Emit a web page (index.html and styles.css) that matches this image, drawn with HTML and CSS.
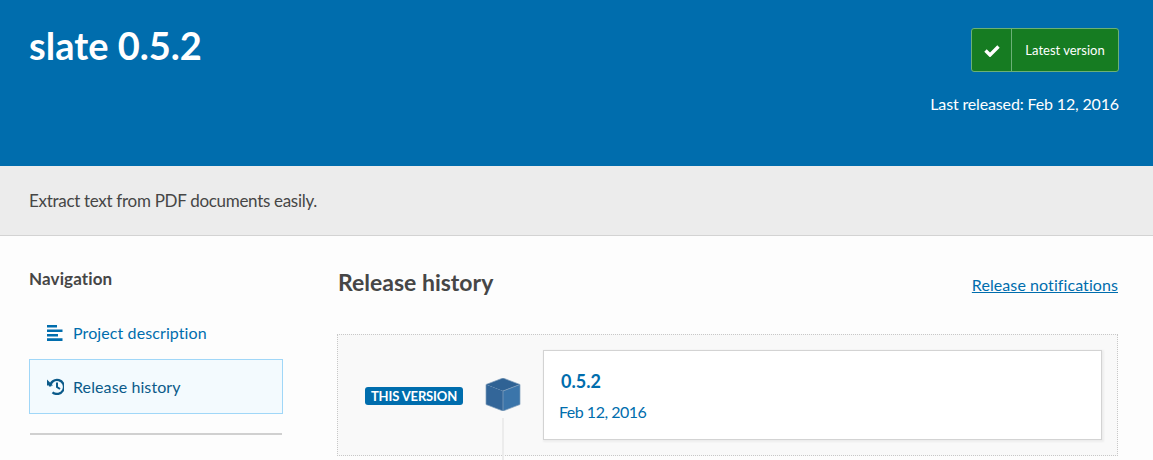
FILE: index.html
```html
<!DOCTYPE html>
<html lang="en">
<head>
<meta charset="utf-8">
<title>slate 0.5.2</title>
<link rel="stylesheet" href="styles.css">
</head>
<body>
<header class="banner">
  <h1 class="title">slate 0.5.2</h1>
  <div class="status">
    <div class="badge">
      <span class="badge-icon">
        <svg width="16" height="13" viewBox="0 0 16 13"><path d="M1.500 6.500 6 11 14.500 2.500" fill="none" stroke="#fff" stroke-width="3.400"/></svg>
      </span>
      <span class="badge-text">Latest version</span>
    </div>
    <p class="released">Last released: Feb 12, 2016</p>
  </div>
</header>
<section class="summary">Extract text from PDF documents easily.</section>
<main class="content">
  <nav class="sidebar">
    <h3 class="nav-title">Navigation</h3>
    <a class="nav-item" href="#">
      <svg class="nav-icon" width="16" height="16" viewBox="0 0 16 16"><path d="M0 0h10v2.600H0zM0 4.400h15.500v2.600H0zM0 8.900h11v2.600H0zM0 13.300h15.500v2.600H0z" fill="#006dad"/></svg>
      Project description
    </a>
    <a class="nav-item nav-active" href="#">
      <svg class="nav-icon" width="17" height="17" viewBox="0 0 17 17"><path d="M3 8.500A7 7 0 1 1 5.500 14.300" fill="none" stroke="#0b5a8a" stroke-width="2.300"/><path d="M0 1.500V7.500H6z" fill="#0b5a8a"/><path d="M10 4.500V9l3 2" fill="none" stroke="#0b5a8a" stroke-width="2"/></svg>
      Release history
    </a>
    <hr class="nav-rule">
  </nav>
  <div class="history">
    <div class="history-head">
      <h2 class="history-title">Release history</h2>
      <a class="notify" href="#">Release notifications</a>
    </div>
    <div class="release-wrap">
      <span class="this-version">THIS VERSION</span>
      <div class="node">
        <svg width="36" height="33" viewBox="0 0 36 33"><path d="M18 0 35 6.500 18 13 1 6.500z" fill="#2f6294"/><path d="M1 6.500 18 13V33L1 26.500z" fill="#336699"/><path d="M18 13 35 6.500V26.500L18 33z" fill="#3b75aa"/><path d="M18 0 35 6.500V26.500L18 33 1 26.500V6.500z" fill="none" stroke="#7f9dba" stroke-width=".7"/><path d="M18 13V33M18 13 35 6.500" fill="none" stroke="#7f9dba" stroke-width=".8"/></svg>
        <span class="node-line"></span>
      </div>
      <a class="release-card" href="#">
        <strong class="release-version">0.5.2</strong>
        <span class="release-date">Feb 12, 2016</span>
      </a>
    </div>
  </div>
</main>
</body>
</html>
```

FILE: styles.css
```css
* { box-sizing: border-box; }
html, body { margin: 0; height: 460px; overflow: hidden; }
body { font-family: "Lato", "Noto Sans", sans-serif; background: #fdfdfd; color: #464646; }
a { text-decoration: none; color: #006dad; }

.banner {
  height: 166px;
  background: #006dad;
  color: #fff;
  display: flex;
  justify-content: space-between;
  padding: 23px 34px 0 29px;
}
.title { margin: 0; font-size: 38px; line-height: 44px; font-weight: 700; }
.status { display: flex; flex-direction: column; align-items: flex-end; padding-top: 5px; }
.badge {
  display: flex;
  width: 148px;
  height: 44px;
  background: #167c22;
  border: 1px solid #6bb077;
  border-radius: 3px;
  align-items: stretch;
}
.badge-icon {
  width: 40px;
  border-right: 1px solid #6bb077;
  display: flex;
  align-items: center;
  justify-content: center;
}
.badge-text { flex: 1; display: flex; align-items: center; justify-content: center; font-size: 13px; }
.released { margin: 21px 0 0; font-size: 16px; line-height: 22px; letter-spacing: -.15px; }

.summary {
  height: 70px;
  background: #ececec;
  border-bottom: 1px solid #d3d3d3;
  padding: 0 29px;
  display: flex;
  align-items: center;
  font-size: 17px;
  letter-spacing: -.3px;
}

.content { display: flex; padding: 30px 35px 0 29px; }
.sidebar { width: 254px; flex: none; }
.nav-title { margin: 0 0 14px; font-size: 17px; line-height: 26px; font-weight: 700; letter-spacing: .12px; }
.nav-item {
  display: flex;
  align-items: center;
  gap: 10px;
  height: 53px;
  padding-left: 17px;
  font-size: 16px;
  letter-spacing: .1px;
  border: 1px solid transparent;
}
.nav-active { height: 55px; background: #f3fafe; border-color: #a0d7f8; color: #0b5a8a; }
.nav-active .nav-icon { margin-right: -1px; }
.nav-rule { margin: 19px 1px 0; border: 0; height: 2px; background: #d0d0d0; }
.nav-icon { flex: none; }

.history { flex: 1; margin-left: 54px; }
.history-head { display: flex; justify-content: space-between; align-items: center; height: 36px; margin: -2px 0 34px; }
.history-title { margin: 0 0 0 1px; font-size: 23px; font-weight: 700; line-height: 36px; }
.notify { font-size: 16px; letter-spacing: .08px; text-decoration: underline; margin-top: 4px; }

.release-wrap {
  height: 122px;
  background: #f9f9f9;
  border: 1px dotted #c8c8c8;
  display: flex;
  align-items: flex-start;
  padding: 15px 15px 0 27px;
}
.this-version {
  margin-top: 37px;
  width: 98px;
  height: 18px;
  background: #006dad;
  color: #fff;
  border-radius: 3px;
  font-size: 13px;
  letter-spacing: -.15px;
  font-weight: 700;
  line-height: 18px;
  text-align: center;
  white-space: nowrap;
}
.node { position: relative; width: 80px; flex: none; height: 105px; display: flex; justify-content: center; padding-top: 28px; }
.node-line { position: absolute; left: 39px; top: 68px; bottom: -6px; width: 2px; background: #ececec; }
.release-card {
  flex: 1;
  height: 90px;
  background: #fff;
  border: 1px solid #d3d3d3;
  box-shadow: 1px 1px 2px 1px rgba(0, 0, 0, .05);
  padding: 18px 16px 0;
  display: flex;
  flex-direction: column;
}
.release-version { margin-left: 1px; font-size: 18px; line-height: 24px; font-weight: 700; }
.release-date { margin-left: -1px; font-size: 16px; line-height: 22px; margin-top: 8px; letter-spacing: -.5px; }
```
